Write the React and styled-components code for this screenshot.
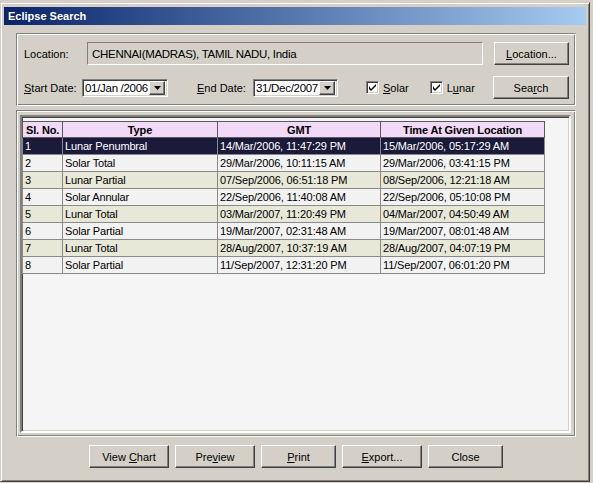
import React from "react";
import styled, { createGlobalStyle, css } from "styled-components";

const GlobalStyle = createGlobalStyle`
  html, body {
    margin: 0;
    padding: 0;
    background: #d4d0c8;
  }
  body {
    font-family: "Liberation Sans", Arial, sans-serif;
    font-size: 11px;
    color: #000;
  }
`;

const raised = css`
  border: 1px solid;
  border-color: #ffffff #404040 #404040 #ffffff;
  box-shadow: inset -1px -1px 0 #808080, inset 1px 1px 0 #d4d0c8;
`;

const sunken = css`
  border: 1px solid;
  border-color: #808080 #ffffff #ffffff #808080;
  box-shadow: inset 1px 1px 0 #404040, inset -1px -1px 0 #d4d0c8;
`;

const Screen = styled.div`
  width: 593px;
  height: 483px;
  padding-top: 2px;
  box-sizing: border-box;
  background: #d4d0c8;
  overflow: hidden;
`;

const Window = styled.div`
  width: 590px;
  height: 480px;
  box-sizing: border-box;
  padding: 3px;
  border: 1px solid;
  border-color: #d4d0c8 #404040 #404040 #d4d0c8;
  box-shadow: inset 1px 1px 0 #ffffff, inset -1px -1px 0 #808080;
  display: flex;
  flex-direction: column;
`;

const TitleBar = styled.div`
  height: 18px;
  flex: none;
  display: flex;
  align-items: center;
  padding-left: 4px;
  margin-top: 1px;
  background: linear-gradient(to right, #0a246a, #a6caf0);
  color: #fff;
  font-weight: bold;
  font-size: 11px;
`;

const Content = styled.div`
  flex: 1;
  display: flex;
  flex-direction: column;
  padding: 8px 10px 0 12px;
`;

const GroupBox = styled.div`
  box-sizing: border-box;
  height: ${(p) => p.$h}px;
  margin-bottom: ${(p) => p.$mb || 0}px;
  border: 1px solid;
  border-color: #808080 #ffffff #ffffff #808080;
  box-shadow: inset 1px 1px 0 #ffffff, inset -1px -1px 0 #808080;
  display: flex;
  flex-direction: column;
`;

const TopGroup = styled(GroupBox)`
  padding: 8px 6px 0 7px;
`;

const ListGroup = styled(GroupBox)`
  padding: 4px 4px 3px 3px;
`;

const Row = styled.div`
  display: flex;
  align-items: center;
  height: 23px;
  margin-top: ${(p) => p.$mt || 0}px;
`;

const Label = styled.span`
  width: ${(p) => p.$w}px;
  margin-left: ${(p) => p.$ml || 0}px;
  flex: none;
  white-space: nowrap;
`;

const ReadOnlyField = styled.div`
  box-sizing: border-box;
  width: 396px;
  height: 23px;
  border: 1px solid;
  border-color: #808080 #ffffff #ffffff #808080;
  display: flex;
  align-items: center;
  padding-left: 4px;
  font-size: 11.5px;
  letter-spacing: -0.3px;
`;

const Button = styled.button`
  box-sizing: border-box;
  width: ${(p) => p.$w || 75}px;
  height: 23px;
  margin-left: ${(p) => p.$ml || 0}px;
  padding: 0;
  background: #d4d0c8;
  ${raised};
  font-family: "Liberation Sans", Arial, sans-serif;
  font-size: 11px;
  color: #000;
  flex: none;
`;

const Combo = styled.div`
  box-sizing: border-box;
  width: ${(p) => p.$w}px;
  height: 18px;
  background: #fff;
  ${sunken};
  display: flex;
  align-items: center;
  padding: 2px;
  font-size: 11.5px;
  letter-spacing: -0.3px;
  flex: none;
`;

const ComboText = styled.span`
  flex: 1;
  white-space: nowrap;
`;

const DropButton = styled.span`
  box-sizing: border-box;
  width: 16px;
  height: 14px;
  background: #d4d0c8;
  ${raised};
  display: flex;
  align-items: center;
  justify-content: center;
`;

const CheckWrap = styled.label`
  display: flex;
  align-items: center;
  gap: 4px;
  margin-left: ${(p) => p.$ml || 0}px;
  flex: none;
`;

const CheckBox = styled.span`
  box-sizing: border-box;
  width: 13px;
  height: 13px;
  background: #fff;
  ${sunken};
  display: flex;
  align-items: center;
  justify-content: center;
`;

const Spacer = styled.div`
  flex: 1;
`;

const ListView = styled.div`
  flex: 1;
  box-sizing: border-box;
  border: 2px solid;
  border-color: #808080 #ffffff #ffffff #808080;
  box-shadow: inset 1px 1px 0 #404040, inset -1px -1px 0 #d4d0c8;
  background: #f5f5f5;
  padding: 4px 0 0 0;
`;

const Table = styled.table`
  border-collapse: collapse;
  table-layout: fixed;
  width: 522px;
  font-size: 11px;
  letter-spacing: -0.15px;
`;

const Th = styled.th`
  height: 15px;
  padding: 0 3px;
  background: #f2d9f7;
  border: 1px solid #5a5a5a;
  font-weight: bold;
  text-align: ${(p) => (p.$left ? "left" : "center")};
  white-space: nowrap;
`;

const Tr = styled.tr`
  height: 17px;
  background: ${(p) =>
    p.$selected ? "#1b1a3a" : p.$alt ? "#e8e8d8" : "#f2f2f2"};
  color: ${(p) => (p.$selected ? "#fff" : "#000")};
`;

const Td = styled.td`
  padding: 0 2px;
  border: 1px solid #8a8a8a;
  white-space: nowrap;
  overflow: hidden;
`;

const ButtonBar = styled.div`
  display: flex;
  justify-content: center;
  gap: 6px;
  margin-top: 8px;
`;

const Arrow = () => (
  <svg width="7" height="4" viewBox="0 0 7 4">
    <path d="M0 0h7L3.5 4z" fill="#000" />
  </svg>
);

const Check = () => (
  <svg width="7" height="7" viewBox="0 0 7 7">
    <path d="M0 2v3l2 2 5-5V0L2 5z" fill="#000" />
  </svg>
);

const rows = [
  ["1", "Lunar Penumbral", "14/Mar/2006, 11:47:29 PM", "15/Mar/2006, 05:17:29 AM"],
  ["2", "Solar Total", "29/Mar/2006, 10:11:15 AM", "29/Mar/2006, 03:41:15 PM"],
  ["3", "Lunar Partial", "07/Sep/2006, 06:51:18 PM", "08/Sep/2006, 12:21:18 AM"],
  ["4", "Solar Annular", "22/Sep/2006, 11:40:08 AM", "22/Sep/2006, 05:10:08 PM"],
  ["5", "Lunar Total", "03/Mar/2007, 11:20:49 PM", "04/Mar/2007, 04:50:49 AM"],
  ["6", "Solar Partial", "19/Mar/2007, 02:31:48 AM", "19/Mar/2007, 08:01:48 AM"],
  ["7", "Lunar Total", "28/Aug/2007, 10:37:19 AM", "28/Aug/2007, 04:07:19 PM"],
  ["8", "Solar Partial", "11/Sep/2007, 12:31:20 PM", "11/Sep/2007, 06:01:20 PM"],
];

export default function App() {
  return (
    <>
      <GlobalStyle />
      <Screen>
        <Window>
          <TitleBar>Eclipse Search</TitleBar>
          <Content>
            <TopGroup $h={73} $mb={4}>
              <Row>
                <Label $w={63}>Location:</Label>
                <ReadOnlyField>CHENNAI(MADRAS), TAMIL NADU, India</ReadOnlyField>
                <Button $ml={11}>
                  <u>L</u>ocation...
                </Button>
              </Row>
              <Row $mt={11}>
                <Label $w={58}>
                  <u>S</u>tart Date:
                </Label>
                <Combo $w={86}>
                  <ComboText>01/Jan /2006</ComboText>
                  <DropButton>
                    <Arrow />
                  </DropButton>
                </Combo>
                <Label $w={56} $ml={29}>
                  <u>E</u>nd Date:
                </Label>
                <Combo $w={85}>
                  <ComboText>31/Dec/2007</ComboText>
                  <DropButton>
                    <Arrow />
                  </DropButton>
                </Combo>
                <CheckWrap $ml={28}>
                  <CheckBox>
                    <Check />
                  </CheckBox>
                  <span>
                    <u>S</u>olar
                  </span>
                </CheckWrap>
                <CheckWrap $ml={21}>
                  <CheckBox>
                    <Check />
                  </CheckBox>
                  <span>
                    L<u>u</u>nar
                  </span>
                </CheckWrap>
                <Spacer />
                <Button $w={76}>
                  Sea<u>r</u>ch
                </Button>
              </Row>
            </TopGroup>
            <ListGroup $h={327}>
              <ListView>
                <Table>
                  <colgroup>
                    <col style={{ width: 40 }} />
                    <col style={{ width: 155 }} />
                    <col style={{ width: 163 }} />
                    <col style={{ width: 164 }} />
                  </colgroup>
                  <thead>
                    <tr>
                      <Th $left>Sl. No.</Th>
                      <Th>Type</Th>
                      <Th>GMT</Th>
                      <Th>Time At Given Location</Th>
                    </tr>
                  </thead>
                  <tbody>
                    {rows.map((r, i) => (
                      <Tr key={r[0]} $selected={i === 0} $alt={i % 2 === 0}>
                        {r.map((c, j) => (
                          <Td key={j}>{c}</Td>
                        ))}
                      </Tr>
                    ))}
                  </tbody>
                </Table>
              </ListView>
            </ListGroup>
            <ButtonBar>
              <Button $w={80}>
                View <u>C</u>hart
              </Button>
              <Button $w={80}>
                Pre<u>v</u>iew
              </Button>
              <Button $w={75}>
                <u>P</u>rint
              </Button>
              <Button $w={80}>
                <u>E</u>xport...
              </Button>
              <Button $w={75}>Close</Button>
            </ButtonBar>
          </Content>
        </Window>
      </Screen>
    </>
  );
}
